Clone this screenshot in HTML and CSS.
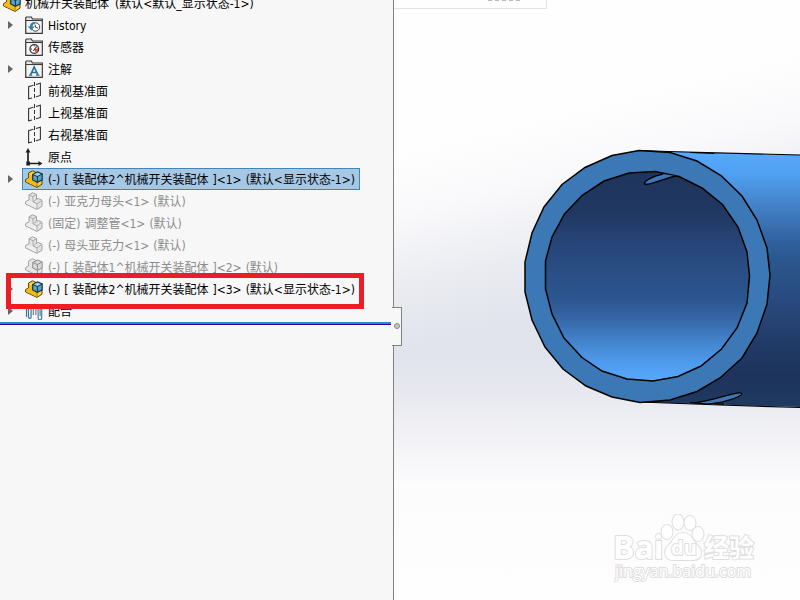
FILE: index.html
```html
<!DOCTYPE html>
<html lang="zh-CN">
<head>
  <meta charset="UTF-8">
  <meta name="viewport" content="width=device-width, initial-scale=1.0">
  <title>机械开关装配体</title>
  <link rel="stylesheet" href="styles.css">
</head>
<body>
  <!-- 图标定义 -->
  <svg class="icon-defs" aria-hidden="true">
    <symbol id="icon-folder" viewBox="0 0 18 18">
      <path d="M.7 17.3V1.9L1.4 1h5l1 2h9.9v14.3z" fill="#e4e4e4" stroke="#3a3a3a" stroke-width="1.2"/>
      <path d="M1 4.5h16" stroke="#3a3a3a"/>
      <path d="M2 5.5h14.3v10.7H2z" fill="#f4f4f4"/>
    </symbol>
    <symbol id="icon-history" viewBox="0 0 18 18">
      <use href="#icon-folder"/>
      <circle cx="10.5" cy="11" r="4.2" fill="#fff" stroke="#444"/>
      <path d="M10 8.5l.6 2.7 2.4 1" fill="none" stroke="#444"/>
      <path d="M10 6C6.8 5.8 5 7.8 4.8 10.5H2.8l3.6 4 3.1-4H7.6C7.7 8.8 8.5 7.6 10 7.5z" fill="#2b83a8"/>
    </symbol>
    <symbol id="icon-sensor" viewBox="0 0 18 18">
      <use href="#icon-folder"/>
      <circle cx="9.3" cy="11" r="4.3" fill="#fff" stroke="#333" stroke-width="1.3"/>
      <path d="M9.8 11.3l3.2-1v2.7l-2.5 1.8z" fill="#e04a2c"/>
      <path d="M8.3 13l3.3-4.5" stroke="#333" stroke-width="1.2"/>
      <path d="M6 11h1M9.3 7.5v1" stroke="#333"/>
    </symbol>
    <symbol id="icon-note" viewBox="0 0 18 18">
      <use href="#icon-folder"/>
      <path d="M5.5 14.8 9.2 7l3.7 7.8M6.8 12.5h4.5" fill="none" stroke="#2d7396" stroke-width="1.7"/>
      <path d="M4 15.2h3.2M11 15.2h3.5" stroke="#2d7396" stroke-width="1.2"/>
    </symbol>
    <symbol id="icon-plane" viewBox="0 0 18 18">
      <path d="M7.5 3.5 3.6 4.6v12.3L7 16M7.5 3.5l1-.3M11 2.5l4.4-1.3v12.2L11 14.8" fill="none" stroke="#333" stroke-width="1.1"/>
      <path d="M9.5 0v18" stroke="#333" stroke-dasharray="4 2"/>
    </symbol>
    <symbol id="icon-origin" viewBox="0 0 18 18">
      <path d="M3 3v12.5h11" fill="none" stroke="#222" stroke-width="1.7"/>
      <path d="M3 0 .5 4.5h5zM17.5 15.5 13.5 13v5z" fill="#222"/>
      <path d="M1.3 13.5H5v4H1.3z" fill="#222"/>
    </symbol>
    <symbol id="icon-assembly" viewBox="0 0 18 18">
      <path d="M.6 9.5 3.5 8V3L7.5.8 12 3v8l5-1v4.2l-5 3.2L.6 12z" fill="#f9d03c" stroke="#5c4300"/>
      <path d="M3.9 4.5v4.8L1.2 10.5v1.2l10.5 5v-4.5L7.500 10V6z" fill="#f3b914"/>
      <path d="M12 12.5v4.3" stroke="#a87800"/>
      <path d="M7.700 4.5 12.5 2 17.2 4v5.8l-4.8 2.5-4.700-2.3z" fill="#5ba3c8" stroke="#123646" stroke-width="1.2"/>
      <path d="M8.5 4.6 12.5 2.7l3.8 1.5-3.9 2z" fill="#a8d3e8"/>
      <path d="M12.4 6.5V12M7.7 4.5l4.7 2L17.2 4" fill="none" stroke="#123646"/>
    </symbol>
    <symbol id="icon-assembly-hidden" viewBox="0 0 18 18">
      <path d="M.6 9.5 3.5 8V3L7.5.8 12 3v8l5-1v4.2l-5 3.2L.6 12z" fill="#e6e6e6" stroke="#a6a6a6"/>
      <path d="M7.7 4.5 12.5 2 17.2 4v5.8l-4.8 2.5-4.7-2.3z" fill="#d8d8d8" stroke="#8e8e8e"/>
      <path d="M12.4 6.5V17M7.7 4.5l4.7 2L17.2 4" fill="none" stroke="#8e8e8e"/>
    </symbol>
    <symbol id="icon-part" viewBox="0 0 18 18">
      <path d="M.6 9.5 4 8V2.8L7.5.8l4 1.7v4.8l2-.8L17 8.300v5.9l-5 3.2L.6 12z" fill="#e4e4e4" stroke="#a0a0a0"/>
      <path d="M1.5 9.7 4.5 8.500l7.5 4.700v3.6L1.2 11.6z" fill="#eee"/>
      <path d="M4 2.8l4 2 3.500-2.300M8 4.8v5l3.5-2.5M8 9.8l4 2 5-3.500M12 11.8v5" fill="none" stroke="#acacac"/>
    </symbol>
    <symbol id="icon-mate" viewBox="0 0 18 18">
      <path d="M1.5 15V5a2.3 2.3 0 0 1 4.6 0v10a1.3 1.3 0 0 1-2.6 0V6" fill="none" stroke="#3c7898" stroke-width="1.2"/>
      <path d="M8.3 13V3.5a1.3 1.3 0 0 1 2.6 0V13" fill="none" stroke="#666"/>
      <path d="M16.7 4v12a1.8 1.8 0 0 1-3.6 0V5a1 1 0 0 1 2 0v9" fill="none" stroke="#3c7898" stroke-width="1.1"/>
    </symbol>
  </svg>

  <div class="app">
    <aside class="tree-panel">
      <ul class="tree">
        <li class="tree-row root">
          <span class="node"><svg class="icon"><use href="#icon-assembly"/></svg><span>机械开关装配体</span><span>(默认&lt;默认_显示状态-1&gt;)</span></span>
        </li>
        <li class="tree-row">
          <button class="toggle" aria-label="展开"></button>
          <span class="node"><svg class="icon"><use href="#icon-history"/></svg><span>History</span></span>
        </li>
        <li class="tree-row">
          <span class="node"><svg class="icon"><use href="#icon-sensor"/></svg><span>传感器</span></span>
        </li>
        <li class="tree-row">
          <button class="toggle" aria-label="展开"></button>
          <span class="node"><svg class="icon"><use href="#icon-note"/></svg><span>注解</span></span>
        </li>
        <li class="tree-row">
          <span class="node"><svg class="icon"><use href="#icon-plane"/></svg><span>前视基准面</span></span>
        </li>
        <li class="tree-row">
          <span class="node"><svg class="icon"><use href="#icon-plane"/></svg><span>上视基准面</span></span>
        </li>
        <li class="tree-row">
          <span class="node"><svg class="icon"><use href="#icon-plane"/></svg><span>右视基准面</span></span>
        </li>
        <li class="tree-row">
          <span class="node"><svg class="icon"><use href="#icon-origin"/></svg><span>原点</span></span>
        </li>
        <li class="tree-row">
          <button class="toggle" aria-label="展开"></button>
          <span class="node selected"><svg class="icon"><use href="#icon-assembly"/></svg><span>(-)</span><span>[</span><span>装配体2^机械开关装配体</span><span>]&lt;1&gt;</span><span>(默认&lt;显示状态-1&gt;)</span></span>
        </li>
        <li class="tree-row">
          <span class="node suppressed"><svg class="icon"><use href="#icon-part"/></svg><span>(-)</span><span>亚克力母头&lt;1&gt;</span><span>(默认)</span></span>
        </li>
        <li class="tree-row">
          <span class="node suppressed"><svg class="icon"><use href="#icon-part"/></svg><span>(固定)</span><span>调整管&lt;1&gt;</span><span>(默认)</span></span>
        </li>
        <li class="tree-row">
          <span class="node suppressed"><svg class="icon"><use href="#icon-part"/></svg><span>(-)</span><span>母头亚克力&lt;1&gt;</span><span>(默认)</span></span>
        </li>
        <li class="tree-row">
          <span class="node suppressed"><svg class="icon"><use href="#icon-assembly-hidden"/></svg><span>(-)</span><span>[</span><span>装配体1^机械开关装配体</span><span>]&lt;2&gt;</span><span>(默认)</span></span>
        </li>
        <li class="tree-row marked">
          <button class="toggle" aria-label="展开"></button>
          <span class="node"><svg class="icon"><use href="#icon-assembly"/></svg><span>(-)</span><span>[</span><span>装配体2^机械开关装配体</span><span>]&lt;3&gt;</span><span>(默认&lt;显示状态-1&gt;)</span></span>
        </li>
        <li class="tree-row">
          <button class="toggle" aria-label="展开"></button>
          <span class="node"><svg class="icon"><use href="#icon-mate"/></svg><span>配合</span></span>
        </li>
      </ul>
      <div class="rollback-bar"></div>
      <button class="splitter" aria-label="折叠面板"></button>
    </aside>

    <main class="viewport">
      <div class="toolbar-edge"></div>

      <!-- 圆管模型 -->
      <svg class="model" viewBox="394 0 406 600" preserveAspectRatio="xMaxYMin slice">
        <defs>
          <linearGradient id="outside" x1="0" y1="152" x2="0" y2="407" gradientUnits="userSpaceOnUse">
            <stop offset="0" stop-color="#55aaff"/>
            <stop offset="0.09" stop-color="#509ff0"/>
            <stop offset="0.22" stop-color="#427fc4"/>
            <stop offset="0.36" stop-color="#2f609d"/>
            <stop offset="0.43" stop-color="#2b568d"/>
            <stop offset="0.58" stop-color="#294a80"/>
            <stop offset="0.75" stop-color="#213b68"/>
            <stop offset="0.87" stop-color="#1d335b"/>
            <stop offset="1" stop-color="#1f3a60"/>
          </linearGradient>
          <linearGradient id="inside" x1="0" y1="172" x2="0" y2="381" gradientUnits="userSpaceOnUse">
            <stop offset="0" stop-color="#1e345a"/>
            <stop offset="0.2" stop-color="#203862"/>
            <stop offset="0.35" stop-color="#27467a"/>
            <stop offset="0.5" stop-color="#2b4f86"/>
            <stop offset="0.6" stop-color="#2b558e"/>
            <stop offset="0.7" stop-color="#3566a6"/>
            <stop offset="0.82" stop-color="#4486d0"/>
            <stop offset="0.92" stop-color="#4f9cef"/>
            <stop offset="1" stop-color="#55aaff"/>
          </linearGradient>
        </defs>
        <path d="M640 150.5 668 151.5 800 155V407L640 402z" fill="url(#outside)"/>
        <path d="M640 150.5 668 151.5 800 155M640 402 720 405 800 407.5M690 152.5 714 153.5M690 402.5 724 404" fill="none" stroke="#000" stroke-width="1.2"/>
        <path d="M694 403C712 401 734 392 741 393 746 395 728 402 708 404z" fill="#3b78b5" stroke="#000" stroke-width="1.2"/>
        <path d="M639 150.5 670 152.5 697 161 721 175.5 742 196 757 220 767 248 770 275 767 304 757 333 742 358 720 378 697 391.5 670 400 640 402.5 612 397 586 386 563 369 545 347 532 320 525 292V262L532 233 544 207 562 184.5 585 167.5 612 155.5z" fill="#3b78b5" stroke="#000" stroke-width="1.5"/>
        <path d="M655 171.5 679 176.5 702 188 722.5 204.5 738 227 747 252 749.5 276 747 303 737 328 721.5 349 701 366 678 376.5 653 381 627 379 602 371 582 357.5 564 338 552 314 545.5 289V261L552 237 564.5 214 582 195.5 604 181 629 173z" fill="url(#inside)" stroke="#000" stroke-width="1.5"/>
        <path d="M663 174C653 176 644 181 644.5 184 650 186 661 179 676 176" fill="#3b78b5" stroke="#000" stroke-width="1.3"/>
      </svg>

      <!-- 水印 -->
      <svg class="watermark" viewBox="0 0 146 72" aria-label="Baidu经验">
        <g class="outline">
          <text class="brand" x="-1" y="45">Bai</text>
          <ellipse cx="53" cy="18" rx="5.5" ry="7"/>
          <ellipse cx="64" cy="8" rx="5.5" ry="7.5"/>
          <ellipse cx="76" cy="9" rx="5.5" ry="7"/>
          <ellipse cx="84" cy="20" rx="5.5" ry="7"/>
          <path d="M69 19C61 19 59 27 55 31 49 36 50 46 59 46H79C88 46 89 37 84 32 79 27 77 19 69 19z"/>
          <text class="du" x="57" y="41">du</text>
          <text class="cn" x="90" y="43">经验</text>
          <text class="site" x="1" y="63">jingyan.baidu.com</text>
        </g>
      </svg>
    </main>
  </div>
</body>
</html>
```
FILE: styles.css
```css
*,
*::before,
*::after {
  margin: 0;
  padding: 0;
  box-sizing: border-box;
}

body {
  font-family: "DejaVu Sans Condensed", "Noto Sans CJK SC", sans-serif;
  font-size: 12px;
  color: #000;
  overflow: hidden;
}

.icon-defs {
  position: absolute;
  width: 0;
  height: 0;
}

.app {
  display: flex;
  min-height: 100vh;
}

/* 左侧设计树 */
.tree-panel {
  position: relative;
  flex: 0 0 394px;
  background-color: #f7f7f7;
  border-right: 1px solid #808080;
}

.tree {
  list-style: none;
  margin-top: -8px;
}

.tree-row {
  position: relative;
  display: flex;
  align-items: center;
  height: 22px;
  padding-left: 22px;
}

.tree-row.root {
  padding-left: 0;
}

.toggle {
  position: absolute;
  left: 8px;
  top: 7px;
  width: 5px;
  height: 8px;
  border: none;
  background-color: #666;
  clip-path: polygon(0 0, 100% 50%, 0 100%);
  cursor: pointer;
}

.node {
  display: flex;
  align-items: center;
  gap: 4px;
  height: 22px;
  padding: 0 4px 0 2px;
  border: 1px solid transparent;
  line-height: 22px;
  white-space: nowrap;
}

.node span {
  padding-top: 2px;
}

.root .node {
  gap: 6px;
}

.node.selected {
  background-color: #a6c8e4;
  border-color: #3f87b8;
}

.node.suppressed {
  color: #8c8c8c;
}

.icon {
  flex: none;
  width: 18px;
  height: 18px;
  margin-right: 1px;
}

.root .icon {
  margin-right: -2px;
}

/* 红色标注框 */
.marked::after {
  content: "";
  position: absolute;
  left: 6px;
  top: -5px;
  width: 358px;
  height: 36px;
  border: 5px solid #ee1c25;
  z-index: 1;
  pointer-events: none;
}

.rollback-bar {
  height: 3px;
  margin-right: 2px;
  background-color: #2f8ac4;
  border-bottom: 1px solid #2a00a0;
}

.splitter {
  position: absolute;
  left: 392px;
  top: 307px;
  width: 10px;
  height: 39px;
  background-color: #f7f7f7;
  border: 1px solid #808080;
  border-left: none;
  z-index: 2;
}

.splitter::before {
  content: "";
  position: absolute;
  left: 2px;
  top: 15px;
  width: 6px;
  height: 6px;
  background-color: #c8c8c8;
  border: 1px solid #888;
  border-radius: 50%;
}

/* 右侧模型视图 */
.viewport {
  position: relative;
  flex: 1;
  overflow: hidden;
  background:
    linear-gradient(rgba(225, 228, 237, 0) 60%, #e8e9ef 66%, #f2f2f6 73%, #fcfcfd 81%, #fefefe 100%),
    linear-gradient(166deg, #fefefe 22%, #f9f9fb 31%, #ebecf1 41%, #e1e4ed 50%);
}

.toolbar-edge {
  position: absolute;
  left: 0;
  top: 0;
  width: 153px;
  height: 9px;
  border: 1px solid #e3e3e3;
  border-width: 0 1px 1px 0;
}

.toolbar-edge::before {
  content: "";
  position: absolute;
  left: 94px;
  top: 0;
  width: 32px;
  height: 1px;
  background: repeating-linear-gradient(90deg, #bbb 0 4px, #fff 4px 7px);
}

.model {
  position: absolute;
  width: 100%;
  height: 100%;
}

.watermark {
  position: absolute;
  right: 40px;
  bottom: 14px;
  width: 146px;
  height: 72px;
}

.outline {
  fill: #fff;
  stroke: #dedede;
  stroke-width: 2px;
  paint-order: stroke;
}

.brand {
  font: bold 32px "Open Sans", sans-serif;
}

.du {
  font: bold 20px "Open Sans", sans-serif;
}

.cn {
  font: bold 25px "Noto Sans CJK SC", sans-serif;
}

.site {
  font: 16px "Open Sans", sans-serif;
}
```
